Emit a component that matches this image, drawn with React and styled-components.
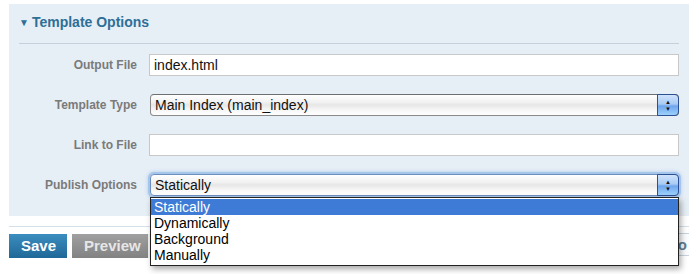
import React from "react";
import styled, { createGlobalStyle, css } from "styled-components";

const Global = createGlobalStyle`
  html, body { margin: 0; padding: 0; background: #ffffff; }
  body { font-family: "Liberation Sans", Arial, sans-serif; width: 699px; height: 274px; overflow: hidden; }
`;

const Page = styled.div`
  position: relative;
  width: 699px;
  height: 274px;
  padding-top: 4px;
  box-sizing: border-box;
`;

const Panel = styled.section`
  margin-left: 9px;
  width: 680px;
  height: 212px;
  background: #e6eef6;
  box-sizing: border-box;
  padding: 10px 10px 0 9px;
`;

const Header = styled.h2`
  margin: 0 0 0 1px;
  display: flex;
  align-items: center;
  gap: 3px;
  font-size: 14px;
  font-weight: bold;
  color: #2e6f96;
  height: 16px;
  padding-bottom: 13px;
  border-bottom: 1px solid #c5d0da;
`;

const Tri = styled.span`
  font-size: 10px;
  line-height: 1;
  margin-top: 1px;
`;

const Rows = styled.div`
  display: flex;
  flex-direction: column;
  gap: 18px;
  padding-top: 10px;
`;

const Row = styled.div`
  display: flex;
  align-items: center;
  gap: 12px;
  height: 22px;
`;

const Label = styled.label`
  width: 119px;
  flex: none;
  text-align: right;
  font-size: 12px;
  font-weight: bold;
  color: #7a7a7a;
`;

const TextInput = styled.div`
  flex: 1;
  height: 22px;
  box-sizing: border-box;
  background: #fff;
  border: 1px solid #c8c8c8;
  font-size: 14px;
  color: #111;
  padding: 2px 4px;
  line-height: 16px;
`;

const Select = styled.div`
  position: relative;
  flex: 1;
  height: 22px;
  margin-left: 1px;
  box-sizing: border-box;
  border: 1px solid #8a8a8a;
  border-top-color: #6f6f6f;
  border-radius: 4px;
  background: linear-gradient(#ffffff 0%, #f2f2f2 35%, #e6e6e6 50%, #f4f4f4 70%, #ffffff 100%);
  font-size: 14px;
  color: #111;
  padding: 2px 4px;
  line-height: 16px;
  ${(p) =>
    p.$focus &&
    css`
      box-shadow: 0 0 0 2px #a6c5ea, 0 0 3px 3px #c3d8f0;
      border-color: #6d8fbf;
    `}
`;

const Stepper = styled.div`
  position: absolute;
  right: -1px;
  top: -1px;
  bottom: -1px;
  width: 20px;
  border: 1px solid #2d4f93;
  border-radius: 0 4px 4px 0;
  background: linear-gradient(#cfe3fb 0%, #a9cbf4 45%, #6fa6ec 55%, #9cd0fb 100%);
  display: flex;
  flex-direction: column;
  align-items: center;
  justify-content: center;
  gap: 1px;
  font-size: 6px;
  line-height: 6px;
  color: #111;
`;

const List = styled.ul`
  position: absolute;
  left: 150px;
  top: 197px;
  width: 529px;
  margin: 0;
  padding: 1px 0 2px;
  list-style: none;
  background: #fff;
  border: 1px solid #222;
  box-sizing: border-box;
  box-shadow: 2px 3px 6px rgba(0, 0, 0, 0.35);
  font-size: 14px;
  z-index: 5;
`;

const Item = styled.li`
  height: 16px;
  line-height: 16px;
  padding-left: 3px;
  color: ${(p) => (p.$sel ? "#fff" : "#000")};
  background: ${(p) => (p.$sel ? "#3e7bd6" : "transparent")};
`;

const Footer = styled.div`
  margin: 10px 0 0 9px;
  width: 680px;
  border-top: 1px solid #d3e0ea;
  padding-top: 7px;
  display: flex;
  align-items: flex-start;
`;

const Button = styled.div`
  height: 24px;
  box-sizing: border-box;
  padding: 0 12px;
  font-size: 15px;
  font-weight: bold;
  line-height: 24px;
  text-align: center;
  ${(p) =>
    p.$kind === "primary" &&
    css`
      background: linear-gradient(#3b8dbf, #1f6897);
      color: #fff;
      width: 58px;
    `}
  ${(p) =>
    p.$kind === "gray" &&
    css`
      background: linear-gradient(#a0a0a0, #828282);
      color: #e6e6e6;
      margin-left: 5px;
      width: 76px;
    `}
  ${(p) =>
    p.$kind === "faded" &&
    css`
      background: #f3f3f3;
      color: #fafafa;
      width: 146px;
    `}
`;

const Spacer = styled.div`
  flex: 1;
`;

const Actions = styled.div`
  width: 148px;
  height: 22px;
  margin-top: -1px;
  box-sizing: border-box;
  border: 1px solid #eef2f6;
  border-radius: 4px;
  background: #fbfcfd;
  color: #e8ecf0;
  font-size: 13px;
  line-height: 20px;
  padding-left: 7px;
  display: flex;
  justify-content: space-between;
`;

const ActArrow = styled.span`
  width: 18px;
  border-left: 1px solid #eef2f6;
  font-size: 6px;
  line-height: 8px;
  color: #dde3ea;
  display: flex;
  flex-direction: column;
  justify-content: center;
  align-items: center;
`;

const Go = styled.div`
  margin-left: 7px;
  width: 27px;
  height: 23px;
  margin-top: -1px;
  box-sizing: border-box;
  border: 1px solid #c7d4de;
  border-right: none;
  background: #fafcfd;
  font-size: 15px;
  font-weight: bold;
  line-height: 21px;
  padding-left: 3px;
  color: #e4eaef;
  span { color: #5f7d92; }
`;

export default function App() {
  return (
    <>
      <Global />
      <Page>
        <Panel>
          <Header>
            <Tri>▼</Tri>Template Options
          </Header>
          <Rows>
            <Row>
              <Label>Output File</Label>
              <TextInput>index.html</TextInput>
            </Row>
            <Row>
              <Label>Template Type</Label>
              <Select>
                Main Index (main_index)
                <Stepper>
                  <span>▲</span>
                  <span>▼</span>
                </Stepper>
              </Select>
            </Row>
            <Row>
              <Label>Link to File</Label>
              <TextInput />
            </Row>
            <Row>
              <Label>Publish Options</Label>
              <Select $focus>
                Statically
                <Stepper>
                  <span>▲</span>
                  <span>▼</span>
                </Stepper>
              </Select>
            </Row>
          </Rows>
        </Panel>
        <Footer>
          <Button $kind="primary">Save</Button>
          <Button $kind="gray">Preview</Button>
          <Button $kind="faded">Save &amp; Publish</Button>
          <Spacer />
          <Actions>
            More actions...
            <ActArrow>
              <span>▲</span>
              <span>▼</span>
            </ActArrow>
          </Actions>
          <Go>
            G<span>o</span>
          </Go>
        </Footer>
        <List>
          <Item $sel>Statically</Item>
          <Item>Dynamically</Item>
          <Item>Background</Item>
          <Item>Manually</Item>
        </List>
      </Page>
    </>
  );
}
